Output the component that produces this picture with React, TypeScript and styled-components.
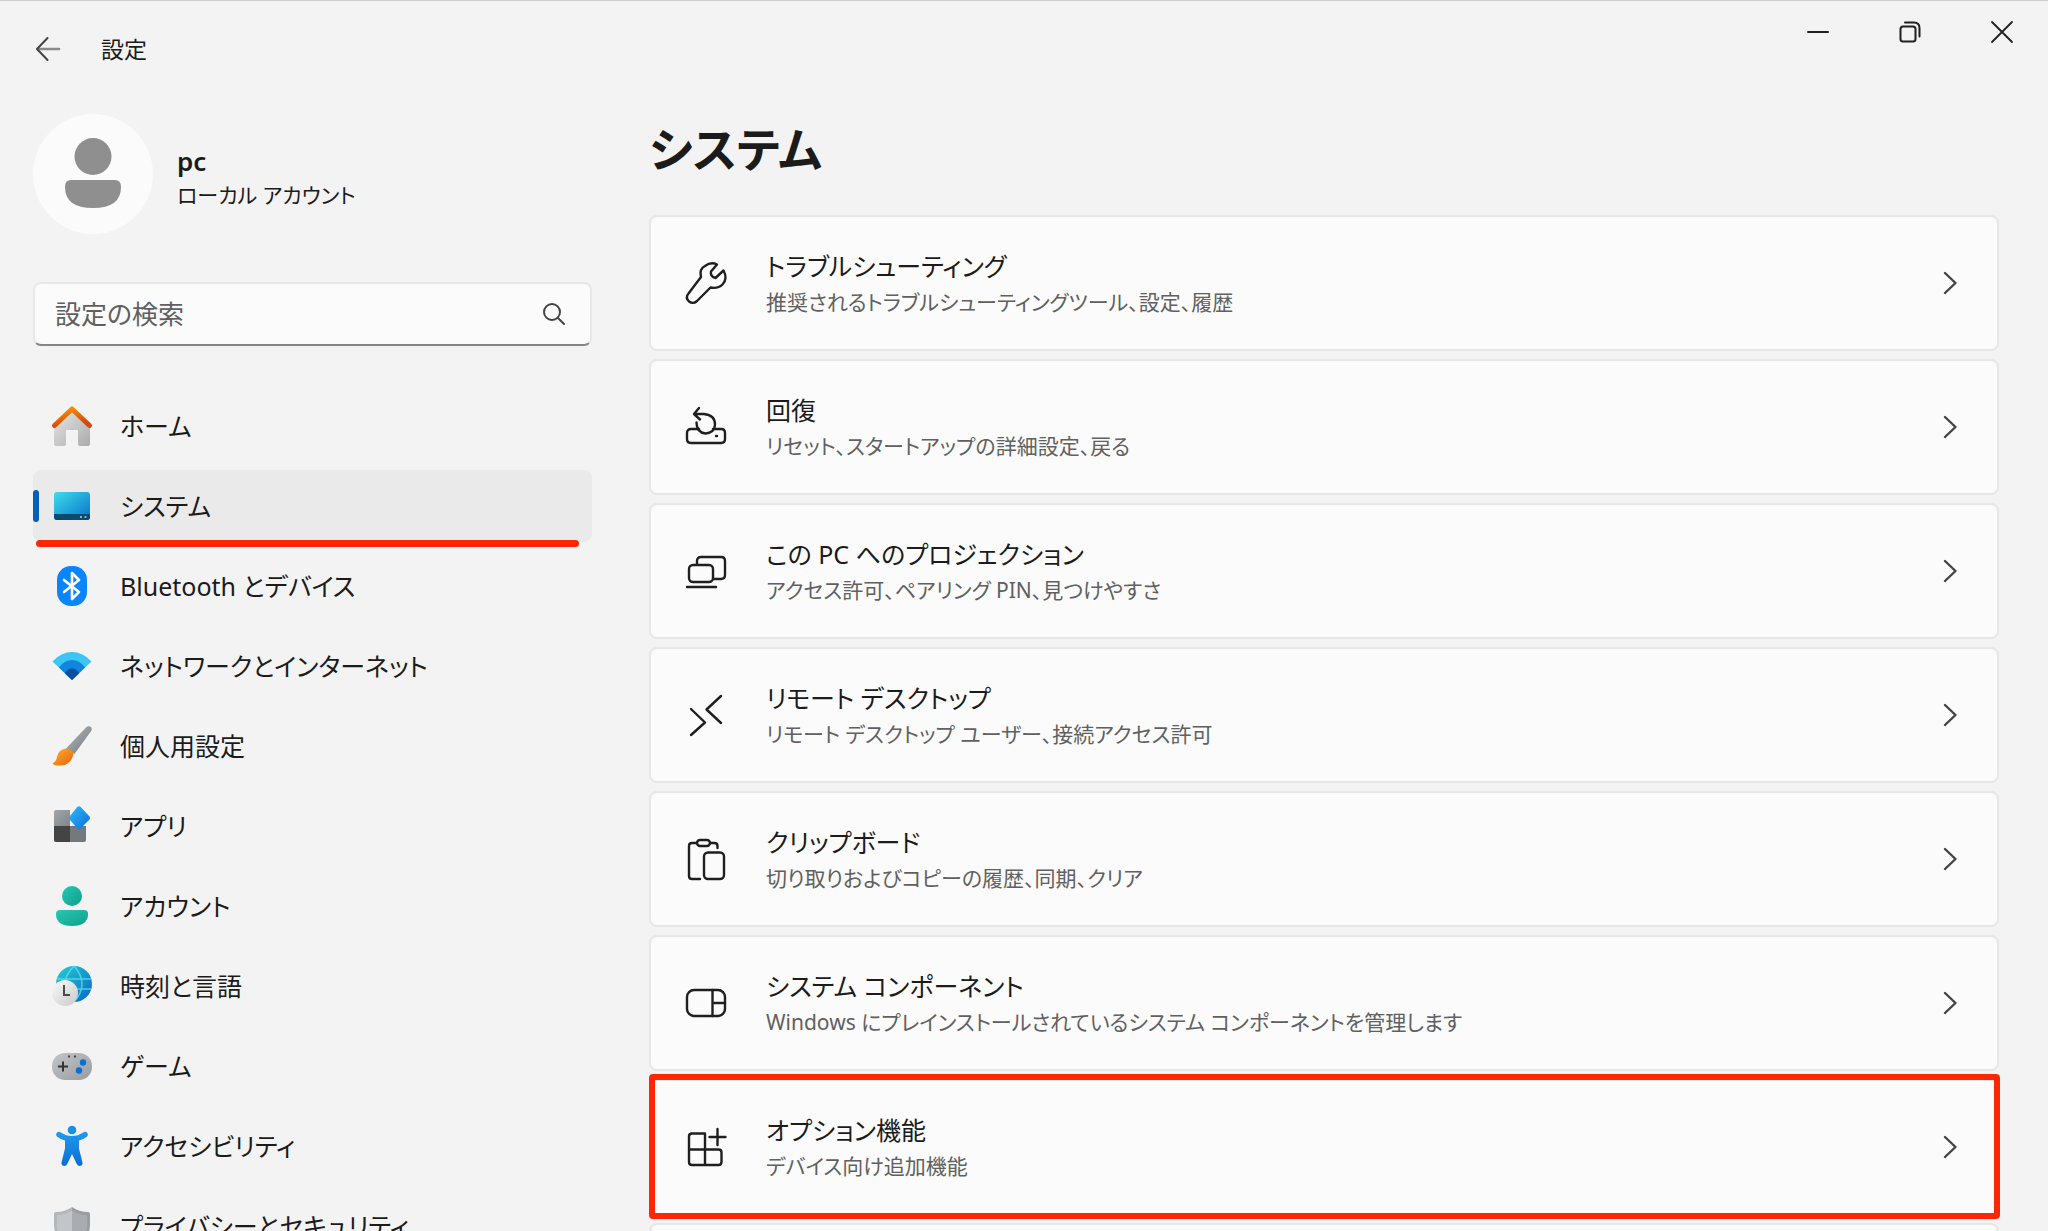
import React from "react";
import styled, { createGlobalStyle } from "styled-components";

const GlobalStyle = createGlobalStyle`
  *, *::before, *::after { box-sizing: border-box; }
  html, body { margin: 0; height: 100%; overflow: hidden; }
  body {
    background: #f3f3f3;
    color: #1b1b1b;
    font-family: "Noto Sans", "Noto Sans CJK JP", sans-serif;
    font-feature-settings: "palt" 1;
  }
  button, input { font: inherit; font-feature-settings: inherit; color: inherit; }
  svg { display: block; flex: none; }
`;

const Window = styled.div`
  display: flex;
  flex-direction: column;
  height: 100vh;
  overflow: hidden;
  border-top: 1px solid #cccccc;
`;

const TitleBar = styled.header`
  display: flex;
  flex: none;
  justify-content: space-between;
  align-items: flex-start;
  height: 95px;
`;

const TitleLeft = styled.div`
  display: flex;
  align-items: center;
  height: 95px;
  padding-left: 32px;
  gap: 37px;
  font-size: 23px;
  line-height: 32px;
`;

const IconButton = styled.button`
  display: flex;
  align-items: center;
  justify-content: center;
  width: 32px;
  height: 32px;
  padding: 0;
  border: 0;
  background: transparent;
`;

const Captions = styled.div`
  display: flex;
`;

const CaptionButton = styled(IconButton)`
  width: 92px;
  height: 62px;
`;

const Body = styled.div`
  display: flex;
  flex: 1;
  min-height: 0;
  padding: 0 49px 0 33px;
  gap: 57px;
`;

const Sidebar = styled.aside`
  display: flex;
  flex-direction: column;
  flex: none;
  width: 559px;
  padding-top: 18px;
`;

const Account = styled.section`
  display: flex;
  flex: none;
  align-items: center;
  gap: 24px;
  margin-bottom: 48px;
`;

const AccountText = styled.div`
  padding-top: 8px;
`;

const AccountName = styled.div`
  font-size: 26px;
  line-height: 34px;
  font-weight: 600;
`;

const AccountKind = styled.div`
  font-size: 21px;
  line-height: 34px;
`;

const SearchBox = styled.label`
  display: flex;
  flex: none;
  align-items: center;
  height: 64px;
  margin-bottom: 44px;
  padding: 0 24px 0 20px;
  background: #fbfbfb;
  border: 2px solid #e8e8e8;
  border-bottom-color: #868686;
  border-radius: 8px;
`;

const SearchInput = styled.input`
  flex: 1;
  min-width: 0;
  padding: 0;
  border: 0;
  outline: 0;
  background: transparent;
  font-size: 26px;
  line-height: 40px;
  &::placeholder { color: #606060; opacity: 1; }
`;

const NavList = styled.ul`
  display: flex;
  flex-direction: column;
  gap: 8px;
  margin: 0;
  padding: 0;
  list-style: none;
`;

const NavLink = styled.a<{ $selected?: boolean }>`
  position: relative;
  display: flex;
  align-items: center;
  height: 72px;
  padding-left: 19px;
  gap: 28px;
  border-radius: 8px;
  background: ${(p) => (p.$selected ? "#eaeaea" : "transparent")};
  color: inherit;
  text-decoration: none;
  white-space: nowrap;
  font-size: 25px;
  line-height: 40px;
`;

const Indicator = styled.span`
  position: absolute;
  left: 0;
  top: 20px;
  width: 6px;
  height: 32px;
  border-radius: 3px;
  background: #005fb8;
`;

const Underline = styled.span`
  position: absolute;
  left: 3px;
  right: 13px;
  bottom: -5px;
  height: 7px;
  border-radius: 4px;
  background: #ff2600;
`;

const Main = styled.main`
  flex: 1;
  min-width: 0;
  padding-top: 21px;
`;

const Heading = styled.h1`
  margin: 0 0 34px;
  font-size: 47px;
  line-height: 64px;
  font-weight: 700;
`;

const Cards = styled.div`
  display: flex;
  flex-direction: column;
  gap: 8px;
`;

const Card = styled.button`
  position: relative;
  display: flex;
  flex: none;
  align-items: center;
  width: 100%;
  height: 136px;
  padding: 0 39px 0 35px;
  gap: 40px;
  border: 2px solid #e7e7e7;
  border-radius: 8px;
  background: #fbfbfb;
  text-align: left;
`;

const CardText = styled.span`
  display: flex;
  flex: 1;
  flex-direction: column;
  min-width: 0;
  padding-top: 2px;
`;

const CardTitle = styled.span`
  font-size: 25px;
  line-height: 36px;
`;

const CardNote = styled.span`
  color: #606060;
  font-size: 21px;
  line-height: 36px;
`;

const Frame = styled.span`
  position: absolute;
  inset: -7px -3px -6px -2px;
  border: 6px solid #ff2600;
  border-radius: 4px;
`;

const Line = ({ children, size = 40 }: { children: React.ReactNode; size?: number }) => (
  <svg width={size} height={size} viewBox="0 0 40 40" fill="none" stroke="#1f1f1f" strokeWidth="2.4"
    strokeLinecap="round" strokeLinejoin="round" overflow="visible" aria-hidden="true">{children}</svg>
);

const Color = ({ children }: { children: React.ReactNode }) => (
  <svg width="40" height="40" viewBox="0 0 40 40" overflow="visible" aria-hidden="true">{children}</svg>
);

const Gradient = ({ id, from, to, x2 = "1", y2 = "1" }: { id: string; from: string; to: string; x2?: string; y2?: string }) => (
  <linearGradient id={id} x1="0" y1="0" x2={x2} y2={y2}>
    <stop offset="0" stopColor={from} />
    <stop offset="1" stopColor={to} />
  </linearGradient>
);

const HomeIcon = () => (
  <Color>
    <defs>
      <Gradient id="wall" from="#e6e6e6" to="#ababab" />
      <Gradient id="roof" from="#f99500" to="#d6480c" x2="0.4" />
    </defs>
    <path d="M20 5 38 21v17q0 2-2 2H28q-2 0-2-2V24H14v14q0 2-2 2H4q-2 0-2-2V21z" fill="url(#wall)" />
    <path d="M2.500 19.500 20 3l17.500 16.500" fill="none" stroke="url(#roof)" strokeWidth="5" strokeLinecap="round" strokeLinejoin="round" />
  </Color>
);

const SystemIcon = () => (
  <Color>
    <defs><Gradient id="screen" from="#3fdcec" to="#0672c9" /></defs>
    <rect x="2" y="6" width="36" height="28" rx="3" fill="url(#screen)" />
    <path d="M2 28h36v3q0 3-3 3H5q-3 0-3-3z" fill="#0a4a6e" />
    <path d="M28 31h2M32.500 31h2" stroke="#9fd8f0" strokeWidth="1.600" />
  </Color>
);

const BluetoothIcon = () => (
  <Color>
    <rect x="5" y="0" width="30" height="40" rx="14" fill="#0a84ff" />
    <path d="m12 14 15 12-7 7V7l7 7-15 12" fill="none" stroke="#fff" strokeWidth="2.600" strokeLinejoin="round" strokeLinecap="round" />
  </Color>
);

const NetworkIcon = () => (
  <Color>
    <path d="M.5 15.500Q9 6 20 6t19.500 9.500L20 34z" fill="#3cc6f4" />
    <path d="M7 21.500Q12 14 20 14t13 7.500L20 34z" fill="#0f86dd" />
    <path d="M13 27.500q2.500-5 7-5t7 5L20 34z" fill="#0b4f9e" />
  </Color>
);

const BrushIcon = () => (
  <Color>
    <defs>
      <Gradient id="handle" from="#b4b8bc" to="#74797e" />
      <Gradient id="bristle" from="#ffb02e" to="#e8620d" />
    </defs>
    <path d="M34 1.500q2-2 4.200-1t1.300 4L22.500 28 14 22.500z" fill="url(#handle)" />
    <path d="M14 22.500q6 0 7.500 5.500Q19 40 7 39.500q-5 0-6.500-2 4-2 4.500-7 1.500-7 9-8z" fill="url(#bristle)" />
  </Color>
);

const AppsIcon = () => (
  <Color>
    <defs>
      <Gradient id="tileTop" from="#a2a7ab" to="#80858a" />
      <Gradient id="diamond" from="#35b8f8" to="#0673dc" />
    </defs>
    <path d="M2 6q0-2 2-2h14v16H2z" fill="url(#tileTop)" />
    <path d="M2 20h16v16H4q-2 0-2-2z" fill="#444" />
    <path d="M18 20h16v14q0 2-2 2H18z" fill="#75797d" />
    <path d="m25.500.8q1.500-1.300 3 0l9 9.700q1 1.500 0 3l-9 9q-1.500 1.300-3 0l-8-9q-1-1.500 0-3z" fill="url(#diamond)" />
  </Color>
);

const AccountsIcon = () => (
  <Color>
    <defs><Gradient id="teal" from="#25c9b3" to="#109e8c" /></defs>
    <circle cx="20" cy="10" r="10" fill="url(#teal)" />
    <path d="M8 24h24q4 0 4 4 0 12-16 12T4 28q0-4 4-4z" fill="url(#teal)" />
  </Color>
);

const TimeIcon = () => (
  <Color>
    <defs>
      <Gradient id="globe" from="#26d0d6" to="#0765c4" />
      <Gradient id="dial" from="#fafafa" to="#c9c9c9" />
    </defs>
    <circle cx="22" cy="18" r="18" fill="url(#globe)" />
    <path d="M5 13h34M5 23h34M22 0q-18 18 0 36M22 0q16 18 0 36" fill="none" stroke="#63e3ee" strokeWidth="1.500" opacity=".75" />
    <circle cx="13" cy="27" r="13" fill="url(#dial)" />
    <path d="M12 19v10h6" fill="none" stroke="#4a4a4a" strokeWidth="2" />
  </Color>
);

const GameIcon = () => (
  <Color>
    <defs><Gradient id="pad" from="#c3c6c9" to="#989b9f" /></defs>
    <rect x="0" y="7" width="40" height="27" rx="13" fill="url(#pad)" />
    <path d="M6 20.500h10M11 15.500v10" stroke="#333" strokeWidth="2" />
    <path d="M16 10.500h2M22 10.500h2" stroke="#444" strokeWidth="2" />
    <circle cx="31" cy="16.500" r="3.200" fill="#0a6fd0" />
    <circle cx="27" cy="24.500" r="3.200" fill="#0a6fd0" />
  </Color>
);

const AccessibilityIcon = () => (
  <Color>
    <defs><Gradient id="person" from="#1f9bf0" to="#0b6dd0" x2="0" /></defs>
    <circle cx="20" cy="4" r="4.300" fill="#1790e8" />
    <path d="M5 6.500q1.500-1.500 4 0Q14 10 20 10t11-3.500q2.500-1.500 4 0 2 2.500-.5 4.500-3.500 2.500-7.500 3.500v8l3.500 14q.3 3-2.500 3.500-2.500 0-3.500-2.500L20 28l-4.500 9.500q-1 2.500-3.500 2.500-2.800-.5-2.500-3.500l3.500-14v-8q-4-1-7.500-3.500Q3 9 5 6.500z" fill="url(#person)" />
  </Color>
);

const ShieldIcon = () => (
  <Color>
    <path d="M20 1q7 5 16 5 2 0 2 2v11q0 15-18 21z" fill="#999da1" />
    <path d="M20 1Q13 6 4 6 2 6 2 8v11q0 15 18 21z" fill="#b4b7ba" />
    <path d="M20 4.500Q13 9 5 9v11q0 11.500 15 17z" fill="#c3c6c9" />
    <path d="M20 4.500Q27 9 35 9v11q0 11.500-15 17z" fill="#a9adb1" />
  </Color>
);

const WrenchIcon = () => (
  <Line><path d="M15 14Q13 6 19 3q6-4.500 12-1.500l-6 7q-1 5 4.500 6.500l8-7.500q4.500 8-1 14Q32 26 24.500 24.500L11 38q-4 3.500-8 .5-4-4-.5-8z" /></Line>
);
const RecoveryIcon = () => (
  <Line>
    <path d="M13 1 8 7l6 5.500M8.500 7H18q11 1 11 10.500-.2 8-9.500 9-9-1-9-11" />
    <path d="M13 22H5q-4 0-4 4v6q0 4 4 4h30q4 0 4-4v-6q0-4-4-4h-8M30 29h1" />
  </Line>
);
const ProjectIcon = () => (
  <Line>
    <path d="M11 13V10q0-4 4-4h20q4 0 4 4v14q0 4-4 4h-7" />
    <rect x="3" y="14" width="24" height="17" rx="4" />
    <path d="M1 36h29" />
  </Line>
);
const RemoteIcon = () => (
  <Line><path d="m5 14 14 13.500L5 40M35 1 20.500 14.500 35 28" /></Line>
);
const ClipboardIcon = () => (
  <Line>
    <path d="M11 4H6Q3 4 3 7v30q0 3 3 3h8M24 4h4.500q3 0 3 3v2" />
    <rect x="11" y="1" width="13" height="6" rx="3" />
    <rect x="18" y="13.500" width="20" height="26.500" rx="4" />
  </Line>
);
const ComponentsIcon = () => (
  <Line>
    <rect x="1" y="7" width="38" height="26" rx="7" />
    <path d="M26.500 7v26M26.500 20H39" />
  </Line>
);
const OptionalIcon = () => (
  <Line>
    <path d="M19 6.500H6q-3 0-3 3V35q0 3 3 3h26.500q3 0 3-3V25.500q0-3-3-3H3M19 6.500V38M31.500 2v16M23.500 10h16" />
  </Line>
);

const Chevron = () => (
  <svg width="16" height="24" viewBox="0 0 16 24" fill="none" stroke="#444" strokeWidth="2.400" strokeLinecap="round" strokeLinejoin="round" aria-hidden="true">
    <path d="m3 2 10.500 10L3 22" />
  </svg>
);

const navItems = [
  { label: "ホーム", Icon: HomeIcon },
  { label: "システム", Icon: SystemIcon, selected: true },
  { label: "Bluetooth とデバイス", Icon: BluetoothIcon },
  { label: "ネットワークとインターネット", Icon: NetworkIcon },
  { label: "個人用設定", Icon: BrushIcon },
  { label: "アプリ", Icon: AppsIcon },
  { label: "アカウント", Icon: AccountsIcon },
  { label: "時刻と言語", Icon: TimeIcon },
  { label: "ゲーム", Icon: GameIcon },
  { label: "アクセシビリティ", Icon: AccessibilityIcon },
  { label: "プライバシーとセキュリティ", Icon: ShieldIcon },
];

const cards = [
  { title: "トラブルシューティング", note: "推奨されるトラブルシューティングツール、設定、履歴", Icon: WrenchIcon },
  { title: "回復", note: "リセット、スタートアップの詳細設定、戻る", Icon: RecoveryIcon },
  { title: "この PC へのプロジェクション", note: "アクセス許可、ペアリング PIN、見つけやすさ", Icon: ProjectIcon },
  { title: "リモート デスクトップ", note: "リモート デスクトップ ユーザー、接続アクセス許可", Icon: RemoteIcon },
  { title: "クリップボード", note: "切り取りおよびコピーの履歴、同期、クリア", Icon: ClipboardIcon },
  { title: "システム コンポーネント", note: "Windows にプレインストールされているシステム コンポーネントを管理します", Icon: ComponentsIcon },
  { title: "オプション機能", note: "デバイス向け追加機能", Icon: OptionalIcon, framed: true },
];

export default function App() {
  return (
    <>
      <GlobalStyle />
      <Window lang="ja">
        <TitleBar>
          <TitleLeft>
            <IconButton type="button" aria-label="戻る">
              <svg width="26" height="24" viewBox="0 0 26 24" fill="none" strokeLinecap="round" strokeLinejoin="round">
                <path d="M3 12h21" stroke="#8a8a8a" strokeWidth="2.600" />
                <path d="M12.500 1 2 12l10.500 11" stroke="#444" strokeWidth="2" />
              </svg>
            </IconButton>
            <span>設定</span>
          </TitleLeft>
          <Captions>
            <CaptionButton type="button" aria-label="最小化">
              <Line size={20}><path d="M0 20h40" strokeWidth="4" /></Line>
            </CaptionButton>
            <CaptionButton type="button" aria-label="元に戻す">
              <Line size={20}>
                <g strokeWidth="4">
                  <rect x="1" y="9" width="30" height="30" rx="5" />
                  <path d="M10 1h18q11 0 11 11v17" />
                </g>
              </Line>
            </CaptionButton>
            <CaptionButton type="button" aria-label="閉じる">
              <Line size={20}><path d="m0 0 40 40M40 0 0 40" strokeWidth="3.600" /></Line>
            </CaptionButton>
          </Captions>
        </TitleBar>
        <Body>
          <Sidebar>
            <Account>
              <svg width="120" height="120" viewBox="0 0 120 120" aria-hidden="true">
                <circle cx="60" cy="60" r="60" fill="#fbfbfb" />
                <circle cx="60" cy="42.500" r="18.500" fill="#8f8f8f" />
                <path d="M38 66h44q6 0 6 7 0 21-28 21T32 73q0-7 6-7z" fill="#8f8f8f" />
              </svg>
              <AccountText>
                <AccountName>pc</AccountName>
                <AccountKind>ローカル アカウント</AccountKind>
              </AccountText>
            </Account>
            <SearchBox>
              <SearchInput type="text" aria-label="設定の検索" placeholder="設定の検索" />
              <svg width="24" height="24" viewBox="0 0 24 24" fill="none" stroke="#444" strokeWidth="2" strokeLinecap="round" aria-hidden="true">
                <circle cx="10" cy="10" r="8" />
                <path d="m16 16 6 6" />
              </svg>
            </SearchBox>
            <nav>
              <NavList>
                {navItems.map(({ label, Icon, selected }) => (
                  <li key={label}>
                    <NavLink href="#" $selected={selected} aria-current={selected ? "page" : undefined}>
                      {selected && <Indicator />}
                      <Icon />
                      {label}
                      {selected && <Underline />}
                    </NavLink>
                  </li>
                ))}
              </NavList>
            </nav>
          </Sidebar>
          <Main>
            <Heading>システム</Heading>
            <Cards>
              {cards.map(({ title, note, Icon, framed }) => (
                <Card type="button" key={title}>
                  <Icon />
                  <CardText>
                    <CardTitle>{title}</CardTitle>
                    <CardNote>{note}</CardNote>
                  </CardText>
                  <Chevron />
                  {framed && <Frame />}
                </Card>
              ))}
              <Card type="button" aria-label="その他の設定" />
            </Cards>
          </Main>
        </Body>
      </Window>
    </>
  );
}
